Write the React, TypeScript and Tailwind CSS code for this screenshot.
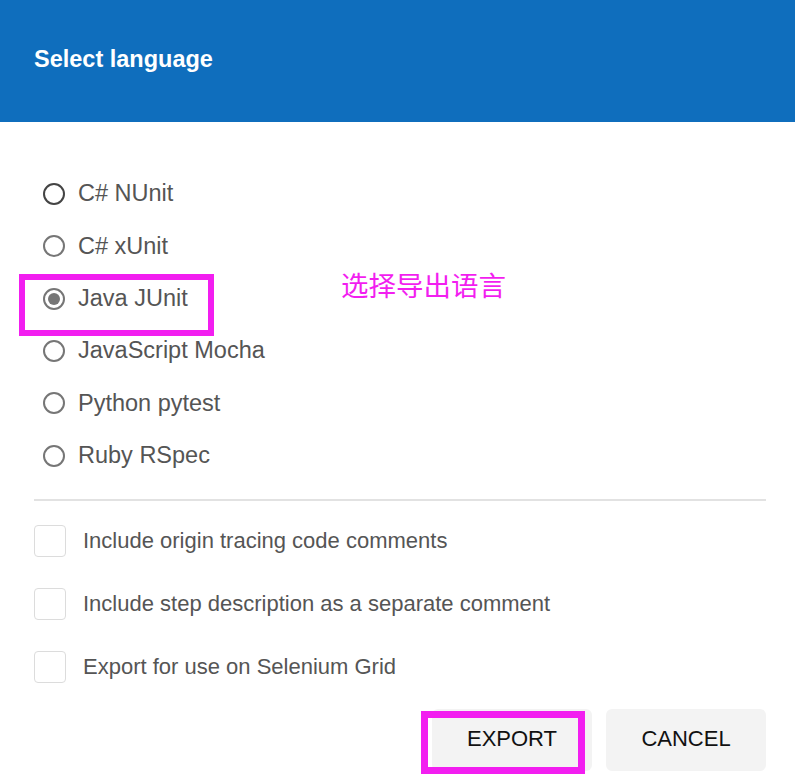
const languages = [
  { label: 'C# NUnit', ring: 'border-[#444]' },
  { label: 'C# xUnit', ring: 'border-[#767676]' },
  { label: 'Java JUnit', ring: 'border-[#767676]', checked: true },
  { label: 'JavaScript Mocha', ring: 'border-[#767676]' },
  { label: 'Python pytest', ring: 'border-[#767676]' },
  { label: 'Ruby RSpec', ring: 'border-[#767676]' },
]

const options = [
  'Include origin tracing code comments',
  'Include step description as a separate comment',
  'Export for use on Selenium Grid',
]

export default function App() {
  return (
    <div className="relative w-[795px] h-[784px] bg-white overflow-hidden font-['Liberation_Sans',Arial,sans-serif]">
      {/* Header */}
      <div className="h-[122px] bg-[#0f6ebd] flex items-center px-[34px]">
        <h1 className="text-white font-bold text-[23.5px] leading-none -mt-[3px]">Select language</h1>
      </div>

      <div className="pl-[34px] pr-[29px] pt-[46px]">
        {/* Language radios */}
        <div className="flex flex-col">
          {languages.map((lang) => (
            <div key={lang.label} className="relative h-[52.3px] flex items-center pl-[9px]">
              <span
                className={`w-[22px] h-[22px] rounded-full border-2 ${lang.ring} flex items-center justify-center shrink-0`}
              >
                {lang.checked && <span className="w-[12px] h-[12px] rounded-full bg-[#767676]" />}
              </span>
              <span className="ml-[13px] text-[23.5px] text-[#555] leading-none">{lang.label}</span>
              {lang.checked && (
                <div className="absolute left-[-15px] top-[1px] w-[195px] h-[62px] border-[6px] border-[#f21ef0]" />
              )}
            </div>
          ))}
        </div>

        <div className="mt-[17px] border-t-2 border-[#e2e2e2]" />

        {/* Checkboxes */}
        <div className="mt-[9px] flex flex-col">
          {options.map((opt) => (
            <div key={opt} className="h-[63px] flex items-center">
              <span className="w-[32px] h-[32px] rounded-[4px] border border-[#dcdcdc] shrink-0" />
              <span className="ml-[17px] text-[22px] text-[#555] leading-none">{opt}</span>
            </div>
          ))}
        </div>

        {/* Buttons */}
        <div className="mt-[10px] flex justify-end gap-[14px]">
          <div className="relative">
            <button className="w-[160px] h-[62px] rounded-[6px] bg-[#f3f3f3] text-[22px] text-[#111] pb-[3px]">
              EXPORT
            </button>
            <div className="absolute left-[-11px] top-[2px] w-[164px] h-[63px] border-[7px] border-[#f21ef0]" />
          </div>
          <button className="w-[160px] h-[62px] rounded-[6px] bg-[#f3f3f3] text-[22px] text-[#111] pb-[3px]">
            CANCEL
          </button>
        </div>
      </div>

      {/* Annotation */}
      <div className="absolute left-[341px] top-[271px] text-[27.5px] leading-none text-[#f21ef0] font-['Noto_Sans_CJK_SC',sans-serif]">
        选择导出语言
      </div>
    </div>
  )
}
